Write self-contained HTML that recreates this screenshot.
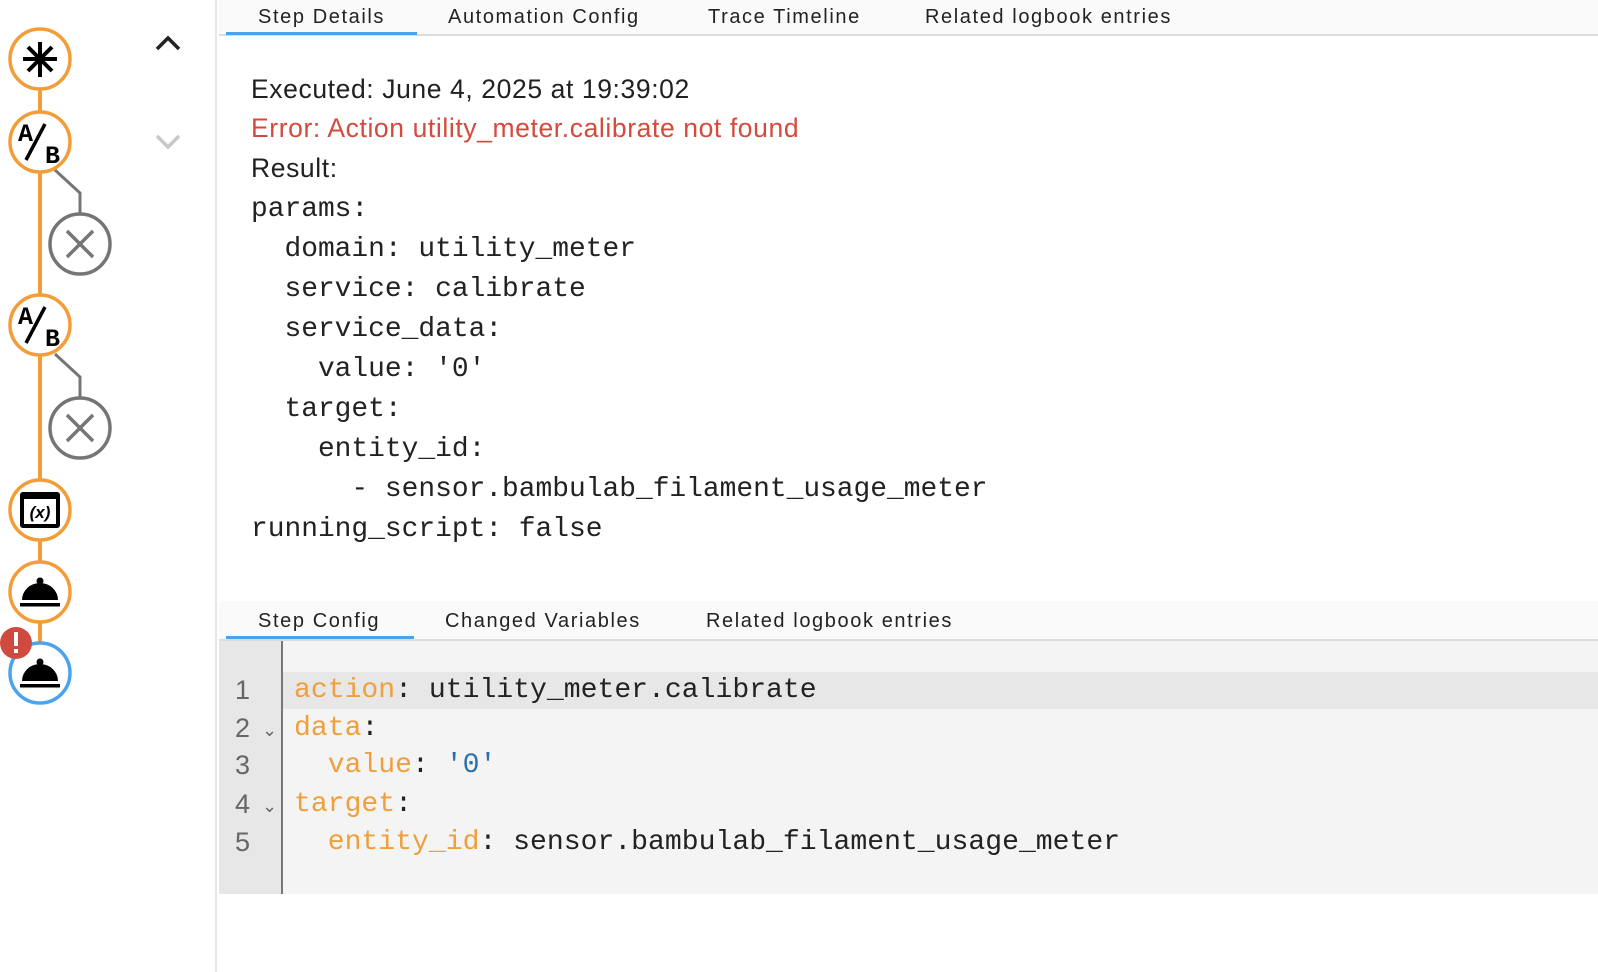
<!DOCTYPE html>
<html><head><meta charset="utf-8"><style>
*{margin:0;padding:0;box-sizing:border-box}
body{width:1598px;height:972px;background:#fff;position:relative;overflow:hidden;font-family:"Liberation Sans",sans-serif;color:#212121}
.abs{position:absolute;white-space:pre}
.side{position:absolute;left:0;top:0;width:217px;height:972px;border-right:2px solid #e6e6e6}
.tabbar{position:absolute;left:219px;right:0;background:#fafafa;border-bottom:2px solid #dcdcdc}
.tab{position:absolute;font-size:20px;letter-spacing:1.6px;color:#222;line-height:24px}
.ul{position:absolute;height:3px;background:#4aa3ec}
.txt{font-size:26.5px;letter-spacing:0.6px;left:251px;line-height:30px}
.mono{font-family:"Liberation Mono",monospace;font-size:27.9px;left:251px;line-height:30px;color:#222}
.code{font-family:"Liberation Mono",monospace;font-size:28.1px;left:294px;line-height:30px;color:#222}
.k{color:#ef9f3b}.s{color:#2a6fb0}
.ln{font-size:27px;color:#666;left:235px;line-height:30px}
.fold{font-size:18px;color:#666;left:262px;line-height:20px}
</style></head><body>
<div class="side">
<svg width="217" height="972" viewBox="0 0 217 972" style="position:absolute;left:0;top:0">
<line x1="40" y1="59" x2="40" y2="673" stroke="#f29d38" stroke-width="4"/>
<path d="M55 170 L80 193 L80 214" fill="none" stroke="#757575" stroke-width="3"/>
<path d="M55 354 L80 377 L80 398" fill="none" stroke="#757575" stroke-width="3"/>
<g fill="#fff" stroke="#f29d38" stroke-width="3.5">
<circle cx="40" cy="59" r="30"/><circle cx="40" cy="142" r="30"/><circle cx="40" cy="325" r="30"/>
<circle cx="40" cy="510" r="30"/><circle cx="40" cy="592" r="30"/>
</g>
<circle cx="40" cy="673" r="30" fill="#fff" stroke="#4aa3ec" stroke-width="3.5"/>
<g fill="#fff" stroke="#757575" stroke-width="3.5">
<circle cx="80" cy="244" r="30"/><circle cx="80" cy="428" r="30"/>
</g>
<g stroke="#757575" stroke-width="3.5"><path d="M67 231 L93 257 M93 231 L67 257"/><path d="M67 415 L93 441 M93 415 L67 441"/></g>
<g stroke="#000" stroke-width="4"><path d="M40 42 V77 M23 59 H57 M28 47 L52 71 M52 47 L28 71"/></g>
<g stroke="#000" stroke-width="3.5"><path d="M26 160 L45 124"/><path d="M26 343 L45 307"/></g>
<g font-family="Liberation Mono,monospace" font-weight="bold" font-size="25" fill="#000">
<text x="18" y="141">A</text><text x="45" y="163">B</text>
<text x="18" y="324">A</text><text x="45" y="346">B</text>
</g>
<rect x="20" y="492" width="40" height="36" rx="3" fill="#000"/>
<rect x="24" y="499" width="32" height="25" fill="#fff"/>
<text x="40" y="518" font-family="Liberation Sans,sans-serif" font-weight="bold" font-style="italic" font-size="17" text-anchor="middle" fill="#000">(x)</text>
<g fill="#000">
<path d="M22 600 A18 17 0 0 1 58 600 Z"/><circle cx="40" cy="581" r="3.5"/><rect x="20" y="603" width="40" height="3.5"/>
<path d="M22 681 A18 17 0 0 1 58 681 Z"/><circle cx="40" cy="662" r="3.5"/><rect x="20" y="684" width="40" height="3.5"/>
</g>
<circle cx="16" cy="643" r="16" fill="#cf4b3f"/>
<rect x="14" y="632" width="4" height="14" fill="#fff"/><rect x="14" y="649" width="4" height="4" fill="#fff"/>
<path d="M157 49 L168 38 L179 49" fill="none" stroke="#222" stroke-width="3.5"/>
<path d="M157 136 L168 147 L179 136" fill="none" stroke="#c8c8c8" stroke-width="3.5"/>
</svg>
</div>

<div class="tabbar" style="top:0;height:36px"></div>
<div class="tab" style="left:258px;top:5px">Step Details</div>
<div class="tab" style="left:448px;top:5px">Automation Config</div>
<div class="tab" style="left:708px;top:5px">Trace Timeline</div>
<div class="tab" style="left:925px;top:5px">Related logbook entries</div>
<div class="ul" style="left:226px;width:191px;top:32px"></div>

<div class="abs txt" style="top:74px">Executed: June 4, 2025 at 19:39:02</div>
<div class="abs txt" style="top:113px;color:#d44a3d">Error: Action utility_meter.calibrate not found</div>
<div class="abs txt" style="top:153px">Result:</div>
<div class="abs mono" style="top:195px">params:</div>
<div class="abs mono" style="top:235px">  domain: utility_meter</div>
<div class="abs mono" style="top:275px">  service: calibrate</div>
<div class="abs mono" style="top:315px">  service_data:</div>
<div class="abs mono" style="top:355px">    value: '0'</div>
<div class="abs mono" style="top:395px">  target:</div>
<div class="abs mono" style="top:435px">    entity_id:</div>
<div class="abs mono" style="top:475px">      - sensor.bambulab_filament_usage_meter</div>
<div class="abs mono" style="top:515px">running_script: false</div>

<div class="tabbar" style="top:601px;height:40px"></div>
<div class="tab" style="left:258px;top:609px">Step Config</div>
<div class="tab" style="left:445px;top:609px">Changed Variables</div>
<div class="tab" style="left:706px;top:609px">Related logbook entries</div>
<div class="ul" style="left:226px;width:188px;top:636px"></div>

<div class="abs" style="left:219px;top:641px;right:0;height:253px;background:#f4f4f4"></div>
<div class="abs" style="left:219px;top:641px;width:62px;height:253px;background:#e7e7e7"></div>
<div class="abs" style="left:281px;top:641px;width:2px;height:253px;background:#777"></div>
<div class="abs" style="left:283px;top:672px;right:0;height:37px;background:#e7e7e7"></div>

<div class="abs ln" style="top:675px">1</div>
<div class="abs ln" style="top:713px">2</div>
<div class="abs ln" style="top:750px">3</div>
<div class="abs ln" style="top:789px">4</div>
<div class="abs ln" style="top:827px">5</div>
<div class="abs fold" style="top:720px">⌄</div>
<div class="abs fold" style="top:796px">⌄</div>

<div class="abs code" style="top:676px"><span class="k">action</span>: utility_meter.calibrate</div>
<div class="abs code" style="top:714px"><span class="k">data</span>:</div>
<div class="abs code" style="top:751px">  <span class="k">value</span>: <span class="s">'0'</span></div>
<div class="abs code" style="top:790px"><span class="k">target</span>:</div>
<div class="abs code" style="top:828px">  <span class="k">entity_id</span>: sensor.bambulab_filament_usage_meter</div>
</body></html>
